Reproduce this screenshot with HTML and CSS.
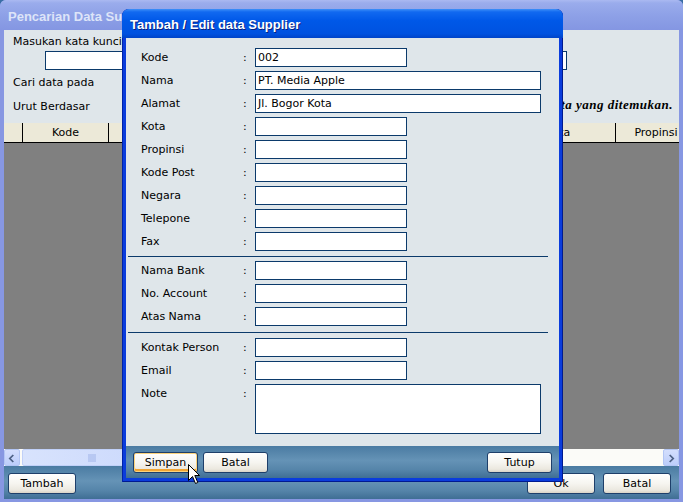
FILE: index.html
```html
<!DOCTYPE html>
<html>
<head>
<meta charset="utf-8">
<link rel="stylesheet" href="styles.css">
</head>
<body>
<div class="screen">
  <div class="win">
    <div class="win-title">Pencarian Data Supplier</div>
    <div class="win-body">
      <div class="srow first">Masukan kata kunci</div>
      <div class="kw"><div class="field kw-field"></div></div>
      <div class="srow r2">Cari data pada</div>
      <div class="srow r3"><span>Urut Berdasar</span><span class="found">Jumlah data yang ditemukan.</span></div>
      <div class="grid">
        <div class="ghead">
          <div class="gc c0"></div>
          <div class="gc c1">Kode</div>
          <div class="gc c2">Nama</div>
          <div class="gc c3">Alamat</div>
          <div class="gc c4">Kota</div>
          <div class="gc c5">Propinsi</div>
        </div>
        <div class="gbody"></div>
      </div>
      <div class="hscroll">
        <div class="sbtn"><svg width="16" height="17" viewBox="0 0 16 17"><polyline points="9.5,4.5 5.5,8.5 9.5,12.5" fill="none" stroke="#4d6185" stroke-width="2"/></svg></div>
        <div class="thumb"><svg width="10" height="8" viewBox="0 0 10 8"><path d="M1 0v8M3 0v8M5 0v8M7 0v8" stroke="#9fb3e8" stroke-width="1"/></svg></div>
        <div class="track"></div>
        <div class="sbtn"><svg width="16" height="17" viewBox="0 0 16 17"><polyline points="6.5,4.5 10.5,8.5 6.5,12.5" fill="none" stroke="#4d6185" stroke-width="2"/></svg></div>
      </div>
    </div>
    <div class="win-foot">
      <button class="btn">Tambah</button>
      <span class="spacer"></span>
      <button class="btn">Ok</button>
      <button class="btn">Batal</button>
    </div>
  </div>

  <div class="dlg">
    <div class="dlg-title">Tambah / Edit data Supplier</div>
    <div class="dlg-body">
      <div class="frow"><span class="fl">Kode</span><span class="fc">:</span><div class="field n">002</div></div>
      <div class="frow"><span class="fl">Nama</span><span class="fc">:</span><div class="field w">PT. Media Apple</div></div>
      <div class="frow"><span class="fl">Alamat</span><span class="fc">:</span><div class="field w">Jl. Bogor Kota</div></div>
      <div class="frow"><span class="fl">Kota</span><span class="fc">:</span><div class="field n"></div></div>
      <div class="frow"><span class="fl">Propinsi</span><span class="fc">:</span><div class="field n"></div></div>
      <div class="frow"><span class="fl">Kode Post</span><span class="fc">:</span><div class="field n"></div></div>
      <div class="frow"><span class="fl">Negara</span><span class="fc">:</span><div class="field n"></div></div>
      <div class="frow"><span class="fl">Telepone</span><span class="fc">:</span><div class="field n"></div></div>
      <div class="frow last"><span class="fl">Fax</span><span class="fc">:</span><div class="field n"></div></div>
      <div class="sep sep1"></div>
      <div class="frow"><span class="fl">Nama Bank</span><span class="fc">:</span><div class="field n"></div></div>
      <div class="frow"><span class="fl">No. Account</span><span class="fc">:</span><div class="field n"></div></div>
      <div class="frow last"><span class="fl">Atas Nama</span><span class="fc">:</span><div class="field n"></div></div>
      <div class="sep sep2"></div>
      <div class="frow"><span class="fl">Kontak Person</span><span class="fc">:</span><div class="field n"></div></div>
      <div class="frow"><span class="fl">Email</span><span class="fc">:</span><div class="field n"></div></div>
      <div class="frow note"><span class="fl">Note</span><span class="fc">:</span><div class="field w area"></div></div>
    </div>
    <div class="dlg-foot">
      <button class="btn sm focus">Simpan</button>
      <button class="btn sm">Batal</button>
      <span class="spacer"></span>
      <button class="btn sm">Tutup</button>
    </div>
  </div>

  <svg class="cursor" width="13" height="21" viewBox="0 0 13 21"><path d="M0.5 0.5 V16.5 L4.5 12.5 L7.5 19.5 L9.8 18.5 L6.8 11.5 H11.5 Z" fill="#fff" stroke="#000" stroke-width="1" stroke-linejoin="miter"/></svg>
</div>
</body>
</html>
```

FILE: styles.css
```css
* { box-sizing: border-box; margin: 0; padding: 0; }
html, body { width: 683px; height: 502px; overflow: hidden; }
body {
  margin: 0;
  font-family: "DejaVu Sans", Verdana, sans-serif;
  font-size: 11px;
  color: #000;
  background: #3a6ea5;
}
.screen { position: relative; width: 683px; height: 502px; }

/* background window */
.win {
  width: 683px;
  height: 502px;
  display: flex;
  flex-direction: column;
  background: #8a9be4;
  border: 0 solid #8797e2;
  border-width: 0 4px 3px 4px;
  border-radius: 6px 6px 0 0;
}
.win-title {
  height: 30px;
  margin: 0 -4px;
  padding: 9px 0 0 8px;
  line-height: 16px;
  border-radius: 6px 6px 0 0;
  background: linear-gradient(#aab9f1 0, #9aacec 3px, #8ea1e7 50%, #8496e2 100%);
  color: #dde4f8;
  font: bold 13px "Liberation Sans", Arial, sans-serif;
  white-space: nowrap;
}
.win-body {
  flex: 1;
  background: #dfe6ea;
  display: flex;
  flex-direction: column;
  min-height: 0;
}
.srow { height: 20px; line-height: 20px; padding-left: 9px; }
.srow.first { margin-top: 2px; height: 19px; line-height: 19px; }
.kw { height: 19px; padding-left: 41px; }
.kw-field { width: 522px; }
.srow.r2 { margin-top: 3px; }
.srow.r3 {
  margin-top: 4px;
  display: flex;
  justify-content: space-between;
  padding-right: 6px;
}
.found {
  font: italic bold 13px "Liberation Serif", "Times New Roman", serif;
  letter-spacing: 0.5px;
}
.grid {
  margin-top: 6px;
  flex: 1;
  display: flex;
  flex-direction: column;
  overflow: hidden;
}
.ghead {
  height: 20px;
  flex-shrink: 0;
  display: flex;
  background: #ece9d8;
  border-bottom: 1px solid #000;
}
.gc {
  flex-shrink: 0;
  border-right: 1px solid #000;
  text-align: center;
  line-height: 19px;
  white-space: nowrap;
  overflow: hidden;
}
.c0 { width: 19px; }
.c1 { width: 86px; }
.c2 { width: 222px; }
.c3 { width: 170px; }
.c4 { width: 115px; }
.c5 { width: 80px; border-right: 0; }
.gbody { flex: 1; background: #808080; }

.hscroll {
  height: 17px;
  flex-shrink: 0;
  display: flex;
  background: #fbfbf8;
}
.sbtn {
  width: 16px;
  height: 17px;
  flex-shrink: 0;
  background: linear-gradient(#d3defd, #bccdfa);
  border: 1px solid #b2c5f4;
  border-radius: 2px;
  display: flex;
}
.thumb {
  width: 141px;
  margin-left: 2px;
  height: 17px;
  background: linear-gradient(90deg, #d8e3fd, #cad8fc);
  border: 1px solid #c0d0f8;
  border-radius: 2px;
  display: flex;
  align-items: center;
  justify-content: center;
}
.track { flex: 1; }

.win-foot {
  height: 33px;
  flex-shrink: 0;
  display: flex;
  align-items: flex-start;
  gap: 8px;
  padding: 7px 8px 0 4px;
  background: linear-gradient(#4a7ba2 0, #6593b6 45%, #5584a9 75%, #3f6e94 100%);
}
.spacer { flex: 1; }

.btn {
  width: 68px;
  height: 21px;
  font-family: "DejaVu Sans", Verdana, sans-serif;
  font-size: 11px;
  color: #000;
  background: linear-gradient(#ffffff 0, #f6f5f0 50%, #ebe8df 85%, #d9d3c6 100%);
  border: 1px solid #1e3f6a;
  border-radius: 3px;
  line-height: 19px;
  padding: 0;
}
.btn.sm { width: 65px; }
.btn.focus {
  box-shadow: inset 0 0 0 1px #fbd37c, inset 0 -2px 0 1px #f1a534;
}

/* dialog */
.dlg {
  position: absolute;
  left: 122px;
  top: 9px;
  width: 441px;
  height: 473px;
  display: flex;
  flex-direction: column;
  background: #0a3cdc;
  border-radius: 7px 7px 0 0;
  padding: 0 4px 4px;
  box-shadow: inset 1px 0 0 #0022a8, inset -1px 0 0 #001a90, inset 0 -1px 0 #001a90;
}
.dlg-title {
  height: 29px;
  margin: 0 -4px;
  border-radius: 7px 7px 0 0;
  background: linear-gradient(#3d8ff8 0, #1169f0 3px, #0058e8 40%, #0052e0 85%, #0044c8 100%);
  color: #fff;
  font: bold 13px "Liberation Sans", Arial, sans-serif;
  padding: 8px 0 0 8px;
  line-height: 16px;
  text-shadow: 1px 1px 0 #0a2280;
  white-space: nowrap;
}
.dlg-body {
  flex: 1;
  background: #dfe6ea;
  padding: 10px 0 0 15px;
}
.frow {
  display: flex;
  align-items: center;
  height: 19px;
  margin-bottom: 4px;
}
.frow.last { margin-bottom: 0; }
.fl { width: 102px; white-space: nowrap; }
.fc { width: 12px; }
.field {
  height: 19px;
  border: 1px solid #0b3a6b;
  background: #fff;
  padding-left: 2px;
  line-height: 17px;
  white-space: nowrap;
}
.field.n { width: 152px; }
.field.w { width: 286px; }
.frow.note { align-items: flex-start; height: 50px; margin-bottom: 0; }
.frow.note .fl, .frow.note .fc { line-height: 19px; }
.field.area { height: 50px; }
.sep {
  height: 1px;
  width: 420px;
  margin-left: -13px;
  background: #0b3a6b;
}
.sep1 { margin-top: 5px; margin-bottom: 4px; }
.sep2 { margin-top: 6px; margin-bottom: 5px; }

.dlg-foot {
  height: 32px;
  flex-shrink: 0;
  display: flex;
  align-items: flex-start;
  gap: 5px;
  padding: 6px 7px 0 7px;
  background: linear-gradient(#4a7ba2 0, #6593b6 45%, #5584a9 75%, #3f6e94 100%);
}

.cursor {
  position: absolute;
  left: 188px;
  top: 464px;
}
```
